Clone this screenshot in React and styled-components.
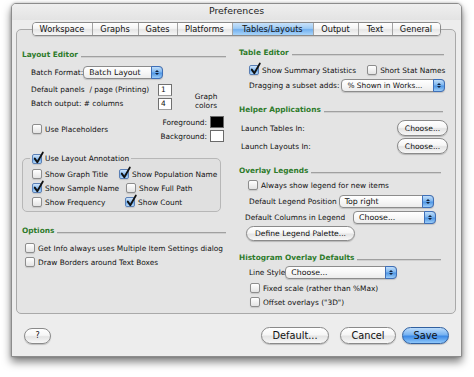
import React from 'react';
import styled, { createGlobalStyle } from 'styled-components';

const Global = createGlobalStyle`
  html, body { margin: 0; padding: 0; background: #fff; }
  body {
    font-family: "DejaVu Sans", "Liberation Sans", sans-serif;
    font-size: 7.4px;
    color: #111;
  }
  #root { width: 474px; height: 377px; overflow: hidden; }
`;

const Stage = styled.div`
  padding: 3px 0 0 11px;
`;

const Window = styled.div`
  width: 451px;
  height: 354px;
  box-sizing: border-box;
  background: #ededed;
  border: 1px solid #8c8c8c;
  border-radius: 5px 5px 0 0;
  box-shadow: 0 5px 9px rgba(0, 0, 0, 0.5), 0 0 3px rgba(0, 0, 0, 0.25);
  display: flex;
  flex-direction: column;
`;

const TitleBar = styled.div`
  height: 16px;
  box-sizing: border-box;
  padding-bottom: 3px;
  flex: none;
  display: flex;
  align-items: center;
  justify-content: center;
  font-size: 9.4px;
  color: #1e1e1e;
  border-radius: 4px 4px 0 0;
  background: linear-gradient(#efefef, #e3e3e3);
`;

const Body = styled.div`
  padding: 2px 5px 0 4px;
  display: flex;
  flex-direction: column;
`;

const TabStrip = styled.div`
  display: flex;
  justify-content: center;
  margin-bottom: -7px;
  position: relative;
  z-index: 1;
`;

const Segments = styled.div`
  display: flex;
  height: 14px;
  box-sizing: border-box;
  border: 1px solid #8a8a8a;
  border-radius: 4px;
  overflow: hidden;
  box-shadow: 0 1px 1px rgba(0, 0, 0, 0.12);
`;

const Tab = styled.div`
  width: ${p => p.$w}px;
  box-sizing: border-box;
  display: flex;
  align-items: center;
  justify-content: center;
  font-size: 8.2px;
  color: #111;
  border-left: ${p => (p.$first ? 'none' : '1px solid #a3a3a3')};
  background: ${p =>
    p.$active
      ? 'linear-gradient(#c9e2fa, #9ecbf4 45%, #74b0ee 55%, #a9d5fa)'
      : 'linear-gradient(#ffffff, #f4f4f4 45%, #e6e6e6 55%, #f6f6f6)'};
`;

const TabBox = styled.div`
  height: 285px;
  box-sizing: border-box;
  border: 1px solid #a9a9a9;
  border-radius: 5px;
  background: #e4e4e4;
  display: grid;
  grid-template-columns: 204px 210px;
  column-gap: 12px;
  align-content: start;
  padding: 17px 7px 0 5px;
`;

const Column = styled.div`
  display: flex;
  flex-direction: column;
  padding-top: ${p => p.$pt || 0}px;
`;

const Header = styled.div`
  height: 10px;
  display: flex;
  align-items: center;
  color: #2e7b2b;
  font-weight: bold;
  margin-top: ${p => p.$mt || 0}px;
  padding-left: ${p => p.$indent || 0}px;
  &::after {
    content: '';
    flex: 1;
    align-self: flex-end;
    margin: 0 ${p => p.$lineEnd || 0}px 2px 3px;
    border-bottom: 1px solid #a0a0a0;
    box-shadow: 0 1px 0 #cfcfcf;
  }
`;

const Row = styled.div`
  display: flex;
  align-items: center;
  height: ${p => p.$h || 12}px;
  margin-top: ${p => p.$mt || 0}px;
  padding-left: ${p => p.$indent || 0}px;
  gap: ${p => p.$gap || 0}px;
  justify-content: ${p => (p.$spread ? 'space-between' : 'flex-start')};
  white-space: nowrap;
`;

const CheckLabel = styled.div`
  display: flex;
  align-items: center;
  gap: 3px;
  height: 12px;
  margin-left: ${p => p.$ml || 0}px;
  white-space: nowrap;
`;

const Box = styled.span`
  position: relative;
  flex: none;
  width: 10px;
  height: 10px;
  box-sizing: border-box;
  border: 1px solid ${p => (p.$on ? '#5a7fb5' : '#8d8d8d')};
  border-radius: 2px;
  background: ${p =>
    p.$on
      ? 'linear-gradient(#d2e6fb, #8fc0f1 45%, #6aa8ea 55%, #b5dafb)'
      : 'linear-gradient(#ffffff, #f1f1f1 50%, #e3e3e3)'};
  box-shadow: 0 1px 1px rgba(0, 0, 0, 0.12);
`;

const CheckSvg = styled.svg`
  position: absolute;
  left: 0px;
  top: -3px;
  overflow: visible;
`;

const Check = ({ on, label, ml }) => (
  <CheckLabel $ml={ml}>
    <Box $on={on}>
      {on && (
        <CheckSvg width="11" height="12" viewBox="0 0 11 12">
          <path
            d="M1.8 6.6 L4.3 10.2 L9.8 0.6"
            fill="none"
            stroke="#111"
            strokeWidth="1.9"
            strokeLinecap="round"
            strokeLinejoin="round"
          />
        </CheckSvg>
      )}
    </Box>
    <span>{label}</span>
  </CheckLabel>
);

const PopupBox = styled.div`
  width: ${p => p.$w}px;
  height: 13px;
  flex: none;
  box-sizing: border-box;
  display: flex;
  align-items: stretch;
  border: 1px solid #8c8c8c;
  border-radius: 4px;
  background: linear-gradient(#ffffff, #f7f7f7 50%, #ececec);
  box-shadow: 0 1px 1px rgba(0, 0, 0, 0.15);
`;

const PopupText = styled.span`
  flex: 1;
  display: flex;
  align-items: center;
  padding-left: 5px;
  font-size: ${p => (p.$big ? 7.8 : 7.4)}px;
  overflow: hidden;
`;

const Stepper = styled.span`
  width: 12px;
  margin: -1px -1px -1px 0;
  box-sizing: border-box;
  border: 1px solid #3e6fb8;
  border-radius: 0 4px 4px 0;
  background: linear-gradient(#c0defa, #7eb6ef 45%, #4f96e4 55%, #9ccdf8);
  display: flex;
  flex-direction: column;
  align-items: center;
  justify-content: center;
  gap: 1px;
`;

const Arrow = styled.span`
  width: 0;
  height: 0;
  border-left: 2px solid transparent;
  border-right: 2px solid transparent;
  ${p => (p.$up ? 'border-bottom' : 'border-top')}: 2.5px solid #10223d;
`;

const Popup = ({ w, children, big }) => (
  <PopupBox $w={w}>
    <PopupText $big={big}>{children}</PopupText>
    <Stepper>
      <Arrow $up />
      <Arrow />
    </Stepper>
  </PopupBox>
);

const Pill = styled.div`
  width: ${p => p.$w}px;
  height: ${p => p.$h || 16}px;
  flex: none;
  box-sizing: border-box;
  display: flex;
  align-items: center;
  justify-content: center;
  font-size: ${p => p.$fs || 7.6}px;
  color: #111;
  margin-top: ${p => p.$mt || 0}px;
  margin-left: ${p => p.$ml || 0}px;
  border: 1px solid ${p => (p.$primary ? '#31609f' : '#8a8a8a')};
  border-radius: 9px;
  background: ${p =>
    p.$primary
      ? 'linear-gradient(#bcdcfb, #78b3f1 45%, #3d8ae6 55%, #8fc8fb)'
      : 'linear-gradient(#ffffff, #f6f6f6 45%, #e4e4e4 55%, #f7f7f7)'};
  box-shadow: 0 1px 1px rgba(0, 0, 0, 0.2);
`;

const TextField = styled.div`
  width: 14px;
  height: 12px;
  box-sizing: border-box;
  border: 1px solid #707070;
  border-bottom-color: #a0a0a0;
  background: #fff;
  display: flex;
  align-items: center;
  padding-left: 2px;
`;

const BatchBlock = styled.div`
  display: flex;
  margin-top: ${p => p.$mt || 0}px;
`;

const BatchGrid = styled.div`
  display: grid;
  grid-template-columns: 127px 14px;
  row-gap: 1px;
  padding-left: 9px;
  align-items: center;
  white-space: nowrap;
`;

const GraphColors = styled.div`
  width: 30px;
  margin: 9px 5px 0 auto;
  text-align: center;
  line-height: 9px;
`;

const ColorsBlock = styled.div`
  display: flex;
  align-items: center;
  justify-content: space-between;
  margin-top: ${p => p.$mt || 0}px;
  padding: 0 2px 0 10px;
`;

const ColorList = styled.div`
  display: flex;
  flex-direction: column;
  gap: 2px;
`;

const ColorRow = styled.div`
  display: flex;
  align-items: center;
  justify-content: flex-end;
  gap: 3px;
  height: 12px;
`;

const Swatch = styled.span`
  width: 14px;
  height: 12px;
  box-sizing: border-box;
  border: 1px solid #6a6a6a;
  background: ${p => p.$c};
`;

const Group = styled.fieldset`
  margin: ${p => p.$mt || 0}px 5px 0 0;
  padding: 3px 0 2px 9px;
  border: 1px solid #b7b7b7;
  border-radius: 5px;
  background: rgba(0, 0, 0, 0.015);
  min-width: 0;
`;

const Legend = styled.legend`
  margin-left: -2px;
  padding: 0 2px;
  height: 11px;
  display: flex;
  align-items: center;
`;

const GroupRow = styled.div`
  display: grid;
  grid-template-columns: ${p => p.$split}px auto;
  height: 14px;
  align-items: center;
`;

const Footer = styled.div`
  display: flex;
  align-items: center;
  padding: 13px 7px 0 8px;
`;

const FooterRight = styled.div`
  margin-left: auto;
  display: flex;
  align-items: center;
`;

const tabs = [
  ['Workspace', 59],
  ['Graphs', 46],
  ['Gates', 39],
  ['Platforms', 55],
  ['Tables/Layouts', 81, true],
  ['Output', 45],
  ['Text', 34],
  ['General', 48],
];

export default function App() {
  return (
    <>
      <Global />
      <Stage>
        <Window>
          <TitleBar>Preferences</TitleBar>
          <Body>
            <TabStrip>
              <Segments>
                {tabs.map(([name, w, active], i) => (
                  <Tab key={name} $w={w} $active={active} $first={i === 0}>
                    {name}
                  </Tab>
                ))}
              </Segments>
            </TabStrip>
            <TabBox>
              <Column $pt={2}>
                <Header>Layout Editor</Header>
                <Row $h={13} $mt={7} $indent={9}>
                  <span>Batch Format:</span>
                  <Popup w={80} big>Batch Layout</Popup>
                </Row>
                <BatchBlock $mt={4}>
                  <BatchGrid>
                    <span>Default panels &nbsp;/ page (Printing)</span>
                    <TextField>1</TextField>
                    <span>Batch output: # columns</span>
                    <TextField>4</TextField>
                  </BatchGrid>
                  <GraphColors>
                    Graph
                    <br />
                    colors
                  </GraphColors>
                </BatchBlock>
                <ColorsBlock $mt={6}>
                  <Check label="Use Placeholders" />
                  <ColorList>
                    <ColorRow>
                      <span>Foreground:</span>
                      <Swatch $c="#000" />
                    </ColorRow>
                    <ColorRow>
                      <span>Background:</span>
                      <Swatch $c="#fff" />
                    </ColorRow>
                  </ColorList>
                </ColorsBlock>
                <Group $mt={11}>
                  <Legend>
                    <Check on label="Use Layout Annotation" />
                  </Legend>
                  <GroupRow $split={87}>
                    <Check label="Show Graph Title" />
                    <Check on label="Show Population Name" />
                  </GroupRow>
                  <GroupRow $split={94}>
                    <Check on label="Show Sample Name" />
                    <Check label="Show Full Path" />
                  </GroupRow>
                  <GroupRow $split={93}>
                    <Check label="Show Frequency" />
                    <Check on label="Show Count" />
                  </GroupRow>
                </Group>
                <Header $mt={13}>Options</Header>
                <Row $mt={7} $indent={3}>
                  <Check label="Get Info always uses Multiple Item Settings dialog" />
                </Row>
                <Row $mt={2} $indent={3}>
                  <Check label="Draw Borders around Text Boxes" />
                </Row>
              </Column>

              <Column>
                <Header $indent={1} $lineEnd={4}>Table Editor</Header>
                <Row $mt={7} $indent={11}>
                  <Check on label="Show Summary Statistics" />
                  <Check ml={11} label="Short Stat Names" />
                </Row>
                <Row $h={13} $mt={3} $indent={11} $gap={2}>
                  <span>Dragging a subset adds:</span>
                  <Popup w={104}>% Shown in Works...</Popup>
                </Row>
                <Header $mt={12} $indent={1} $lineEnd={5}>Helper Applications</Header>
                <Row $h={16} $mt={6} $indent={3} $spread>
                  <span>Launch Tables In:</span>
                  <Pill $w={51}>Choose...</Pill>
                </Row>
                <Row $h={16} $mt={2} $indent={3} $spread>
                  <span>Launch Layouts In:</span>
                  <Pill $w={51}>Choose...</Pill>
                </Row>
                <Header $mt={11} $indent={1} $lineEnd={7}>Overlay Legends</Header>
                <Row $mt={4} $indent={10}>
                  <Check label="Always show legend for new items" />
                </Row>
                <Row $h={13} $mt={4} $indent={11} $gap={2}>
                  <span>Default Legend Position</span>
                  <Popup w={95} big>Top right</Popup>
                </Row>
                <Row $h={13} $mt={3} $indent={7} $gap={8}>
                  <span>Default Columns in Legend</span>
                  <Popup w={83} big>Choose...</Popup>
                </Row>
                <Row $h={15} $mt={2} $indent={8}>
                  <Pill $w={109} $h={15}>Define Legend Palette...</Pill>
                </Row>
                <Header $mt={11} $indent={1} $lineEnd={7}>Histogram Overlay Defaults</Header>
                <Row $h={13} $mt={4} $indent={11}>
                  <span>Line Style</span>
                  <Popup w={112} big>Choose...</Popup>
                </Row>
                <Row $mt={3} $indent={12}>
                  <Check label="Fixed scale (rather than %Max)" />
                </Row>
                <Row $mt={2} $indent={12}>
                  <Check label='Offset overlays ("3D")' />
                </Row>
              </Column>
            </TabBox>
            <Footer>
              <Pill $w={27} $h={16} $fs={8}>?</Pill>
              <FooterRight>
                <Pill $w={68} $h={17} $fs={9.8}>Default...</Pill>
                <Pill $w={56} $h={17} $fs={9.8} $ml={11}>Cancel</Pill>
                <Pill $w={47} $h={17} $fs={9.8} $ml={6} $primary>Save</Pill>
              </FooterRight>
            </Footer>
          </Body>
        </Window>
      </Stage>
    </>
  );
}
